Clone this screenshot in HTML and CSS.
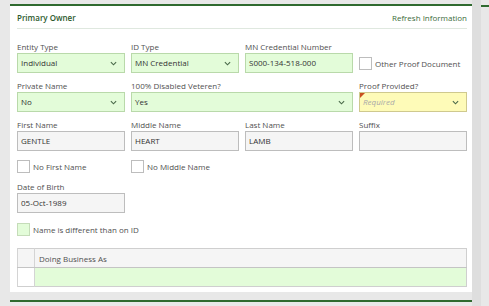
FILE: index.html
```html
<!DOCTYPE html>
<html lang="en">

<head>
    <meta charset="UTF-8">
    <meta name="viewport" content="width=device-width, initial-scale=1.0">
    <title>Primary Owner</title>
    <link rel="stylesheet" href="styles.css">
</head>

<body>
    <div class="page">
        <div class="main">
            <div class="card">
                <div class="head">
                    <h2>Primary Owner</h2>
                    <a class="refresh">Refresh Information</a>
                </div>
                <div class="form">
                    <div class="row">
                        <div class="field">
                            <p>Entity Type</p>
                            <div class="select ok">Individual<svg viewBox="0 0 8 5"><path d="M1 1l3 3 3-3" /></svg></div>
                        </div>
                        <div class="field">
                            <p>ID Type</p>
                            <div class="select ok">MN Credential<svg viewBox="0 0 8 5"><path d="M1 1l3 3 3-3" /></svg></div>
                        </div>
                        <div class="field">
                            <p>MN Credential Number</p>
                            <div class="input ok">S000-134-518-000</div>
                        </div>
                        <label class="check inline"><span class="box"></span>Other Proof Document</label>
                    </div>
                    <div class="row">
                        <div class="field">
                            <p>Private Name</p>
                            <div class="select ok">No<svg viewBox="0 0 8 5"><path d="M1 1l3 3 3-3" /></svg></div>
                        </div>
                        <div class="field wide">
                            <p>100% Disabled Veteren?</p>
                            <div class="select ok">Yes<svg viewBox="0 0 8 5"><path d="M1 1l3 3 3-3" /></svg></div>
                        </div>
                        <div class="field">
                            <p>Proof Provided?</p>
                            <div class="select required"><em>Required</em><svg viewBox="0 0 8 5"><path d="M1 1l3 3 3-3" /></svg></div>
                        </div>
                    </div>
                    <div class="row names">
                        <div class="field">
                            <p>First Name</p>
                            <div class="input">GENTLE</div>
                        </div>
                        <div class="field">
                            <p>Middle Name</p>
                            <div class="input">HEART</div>
                        </div>
                        <div class="field">
                            <p>Last Name</p>
                            <div class="input">LAMB</div>
                        </div>
                        <div class="field">
                            <p>Suffix</p>
                            <div class="input"></div>
                        </div>
                    </div>
                    <div class="row checks">
                        <label class="check"><span class="box"></span>No First Name</label>
                        <label class="check"><span class="box"></span>No Middle Name</label>
                    </div>
                    <div class="row dob">
                        <div class="field">
                            <p>Date of Birth</p>
                            <div class="input">05-Oct-1989</div>
                        </div>
                    </div>
                    <div class="row checks last">
                        <label class="check long"><span class="box green"></span>Name is different than on ID</label>
                    </div>
                    <table class="grid">
                        <tr>
                            <th class="sel"></th>
                            <th>Doing Business As</th>
                        </tr>
                        <tr>
                            <td class="sel"></td>
                            <td class="ok"></td>
                        </tr>
                    </table>
                </div>
            </div>
            <div class="next"></div>
        </div>
        <div class="track"></div>
        <div class="side"></div>
    </div>
</body>

</html>
```
FILE: styles.css
```css
* {
    margin: 0;
    padding: 0;
    box-sizing: border-box;
    font-family: 'Open Sans', 'Segoe UI', sans-serif;
}

html,
body {
    height: 100%;
    background-color: #e8e8e8;
    overflow: hidden;
}

.page {
    display: flex;
    height: 100%;
    padding-top: 4px;
}

.main {
    width: 472px;
    padding-left: 10px;
}

.card {
    background-color: #fff;
    border-top: 2px solid #2f6a2f;
    height: 288px;
    padding: 0 5px 0 7px;
}

.head {
    display: flex;
    justify-content: space-between;
    align-items: center;
    height: 23px;
    border-bottom: 1px solid #dfe8df;
    margin-bottom: 12px;
}

.head h2 {
    font-size: 8px;
    font-weight: 600;
    color: #2c5a2c;
}

.refresh {
    font-size: 8px;
    color: #3b6b3b;
}

.row {
    display: grid;
    grid-template-columns: repeat(4, 108px);
    column-gap: 6px;
    margin-bottom: 7px;
}

.field p {
    font-size: 8px;
    line-height: 11px;
    color: #505050;
    margin-bottom: 1px;
}

.field.wide {
    grid-column: span 2;
}

.input,
.select {
    height: 20px;
    border: 1px solid #bdbdbd;
    background-color: #f5f5f5;
    font-size: 8px;
    line-height: 18px;
    color: #333;
    padding-left: 3px;
}

.select {
    position: relative;
}

.select svg {
    position: absolute;
    right: 7px;
    top: 7px;
    width: 7px;
    height: 5px;
    fill: none;
    stroke: #4a6a4a;
    stroke-width: 1.3;
}

.ok {
    background-color: #e3fcd9;
    border-color: #b9d9aa;
}

.required {
    background-color: #fefbb8;
    border-color: #cfc98e;
}

.required::before {
    content: "";
    position: absolute;
    left: 0;
    top: 0;
    border-top: 5px solid #c9501f;
    border-right: 5px solid transparent;
}

.required em {
    color: #a9a9a9;
}

.check {
    display: flex;
    align-items: center;
    gap: 3px;
    font-size: 8px;
    color: #505050;
    height: 13px;
}

.check.inline {
    align-self: end;
    margin-bottom: 3px;
}

.check.long {
    grid-column: span 2;
}

.box {
    width: 13px;
    height: 13px;
    border: 1px solid #bdbdbd;
    background-color: #fff;
}

.box.green {
    background-color: #e3fcd9;
    border-color: #c5dcb9;
}

.row.names {
    margin-bottom: 9px;
}

.checks {
    margin-bottom: 8px;
}

.row.dob {
    margin-bottom: 10px;
}

.row.last {
    margin-bottom: 12px;
}

.grid {
    width: 450px;
    border-collapse: collapse;
    border: 1px solid #cfcfcf;
}

.grid th,
.grid td {
    height: 19px;
    font-size: 8px;
    font-weight: normal;
    color: #505050;
    text-align: left;
    padding-left: 4px;
    border-left: 1px solid #d4d4d4;
}

.grid th {
    background-color: #f5f5f5;
    border-bottom: 1px solid #c4c4c4;
}

.grid .sel {
    width: 17px;
    background-color: #fff;
}

.grid th.sel {
    background-color: #f5f5f5;
}

.grid td.ok {
    background-color: #e3fcd9;
}

.next {
    margin-top: 8px;
    height: 20px;
    border-top: 2px solid #2f6a2f;
}

.track {
    width: 9px;
    margin-top: -4px;
    background-color: #dedede;
}

.side {
    flex: 1;
    border-top: 2px solid #2f6a2f;
    height: 10px;
    margin-top: 1px;
}
```
